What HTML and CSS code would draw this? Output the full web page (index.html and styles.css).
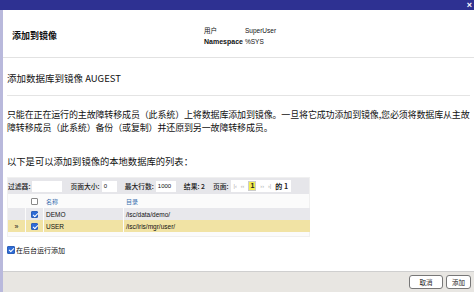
FILE: index.html
```html
<!DOCTYPE html>
<html>
<head>
<meta charset="utf-8">
<link rel="stylesheet" href="styles.css">
</head>
<body>
<div class="window">
  <div class="topbar"><span class="close">×</span></div>
  <div class="frame">
    <header class="header">
      <div class="htitle">添加到镜像</div>
      <div class="info">
        <div class="irow"><span class="ilabel">用户</span><span class="ival">SuperUser</span></div>
        <div class="irow"><span class="ilabel strong">Namespace</span><span class="ival">%SYS</span></div>
      </div>
    </header>
    <main class="content">
      <div class="subtitle">添加数据库到镜像 AUGEST</div>
      <p class="desc">只能在正在运行的主故障转移成员（此系统）上将数据库添加到镜像。一旦将它成功添加到镜像,您必须将数据库从主故障转移成员（此系统）备份（或复制）并还原到另一故障转移成员。</p>
      <div class="listhead">以下是可以添加到镜像的本地数据库的列表：</div>
      <div class="tablebox">
        <div class="toolbar">
          <span class="lbl">过滤器:</span><span class="inp w30"></span>
          <span class="lbl gap">页面大小:</span><span class="inp w14">0</span>
          <span class="lbl gap">最大行数:</span><span class="inp w20">1000</span>
          <span class="lbl gap">结果: 2</span>
          <span class="lbl gap">页面:</span>
          <span class="pager"><span class="pg">|‹</span><span class="pg">‹‹</span><span class="cur">1</span><span class="pg">››</span><span class="pg">›|</span><span class="of">的 1</span></span>
        </div>
        <div class="grid">
          <div class="c0 hd"></div><div class="c1 hd"><span class="cb"></span></div><div class="c2 hd th">名称</div><div class="c3 hd th">目录</div>
          <div class="c0 r1"></div><div class="c1 r1"><span class="cb on"></span></div><div class="c2 r1">DEMO</div><div class="c3 r1">/isc/data/demo/</div>
          <div class="c0 r2">»</div><div class="c1 r2"><span class="cb on"></span></div><div class="c2 r2">USER</div><div class="c3 r2">/isc/iris/mgr/user/</div>
        </div>
      </div>
      <label class="bg"><span class="cb on big"></span>在后台运行添加</label>
    </main>
    <footer class="footer">
      <button class="btn">取消</button>
      <button class="btn">添加</button>
    </footer>
  </div>
</div>
</body>
</html>
```

FILE: styles.css
```css
* { box-sizing: border-box; }
html, body { margin: 0; padding: 0; background: #fff; }
body { font-family: "Noto Sans CJK SC", "Liberation Sans", sans-serif; color: #111; }
.window { width: 474px; height: 292px; display: flex; flex-direction: column; overflow: hidden; }
.topbar { height: 10px; background: #2e3192; display: flex; justify-content: flex-end; align-items: center; padding-right: 2px; }
.close { color: #fff; font-size: 9px; line-height: 10px; font-family: "Liberation Sans", sans-serif; font-weight: bold; }
.frame { flex: 1; display: flex; flex-direction: column; border-left: 3px solid #b9b9dc; }
.header { height: 48px; display: flex; align-items: center; border-bottom: 1px solid #e2e2e2; padding-left: 9px; padding-top: 3px; }
.htitle { font-size: 9px; font-weight: bold; width: 192px; }
.info { display: flex; flex-direction: column; gap: 2px; margin-top: 2px; }
.irow { display: flex; align-items: baseline; font-size: 6.5px; line-height: 9px; }
.ilabel { width: 41px; }
.strong { font-weight: bold; font-family: "Liberation Sans", sans-serif; font-size: 7px; }
.ival { font-family: "Liberation Sans", sans-serif; font-size: 6.5px; }
.content { flex: 1; padding: 0 4px; }
.subtitle { height: 38px; display: flex; align-items: center; font-size: 9.5px; border-bottom: 1px solid #e4e4e4; padding-top: 2px; }
.desc { margin: 12px 0 0; font-size: 9px; line-height: 13px; letter-spacing: -0.15px; }
.listhead { margin-top: 21px; font-size: 9.3px; line-height: 13px; }
.tablebox { margin-top: 9px; width: 303px; background: #fbfbfb; border: 1px solid #f0f0f0; padding-bottom: 4px; }
.toolbar { height: 16px; background: #e6e6ea; display: flex; align-items: center; font-size: 6.8px; padding-left: 0; }
.lbl { white-space: nowrap; color: #222; font-weight: 500; }
.gap { margin-left: 8px; }
.inp { height: 11px; background: #fff; margin-left: 2px; font-family: "Liberation Sans", sans-serif; font-size: 6px; line-height: 11px; padding-left: 2px; }
.w30 { width: 30px; }
.w14 { width: 15px; }
.w20 { width: 20px; }
.pager { margin-left: 2px; display: flex; align-items: center; background: #fff; height: 12px; padding: 0 3px; gap: 4px; font-family: "Liberation Sans", sans-serif; font-size: 5.5px; color: #aaa; }
.cur { background: #f2ee50; color: #222; font-weight: bold; font-size: 7px; padding: 0 1px; border: 1px solid #ccc; line-height: 8px; }
.of { color: #222; font-family: "Noto Sans CJK SC", sans-serif; font-size: 7px; font-weight: bold; }
.grid { display: grid; grid-template-columns: 17px 17px 79px 186px; grid-template-rows: 14px 12px 12px; column-gap: 1px; row-gap: 0; margin-top: 0; font-size: 6.5px; font-family: "Liberation Sans", "Noto Sans CJK SC", sans-serif; }
.grid > div { display: flex; align-items: center; padding-left: 2px; }
.th { color: #3a6fb0; font-family: "Noto Sans CJK SC", sans-serif; font-size: 6px; }
.r1 { background: #e8e8ec; }
.r2 { background: #f1e3a4; }
.c0 { justify-content: center; padding-left: 0 !important; font-size: 7px; }
.c1 { justify-content: center; padding-left: 0 !important; }
.cb { width: 7px; height: 7px; border: 1px solid #888; background: #fff; border-radius: 1px; display: inline-block; position: relative; }
.cb.on { background: #2d6bd6; border-color: #2d5fb8; }
.cb.on::after { content: ""; position: absolute; left: 1.5px; top: 0px; width: 2px; height: 4px; border: solid #fff; border-width: 0 1px 1px 0; transform: rotate(45deg); }
.bg { display: flex; align-items: center; margin-top: 8px; font-size: 7px; gap: 1px; }
.cb.big { width: 8px; height: 8px; }
.footer { height: 21px; background: #e8e6e2; border-top: 1px solid #cfcfcf; display: flex; justify-content: flex-end; align-items: center; gap: 3px; padding-right: 3px; }
.btn { height: 14px; background: #fff; border: 1px solid #777; border-radius: 3px; font-family: "Noto Sans CJK SC", sans-serif; font-size: 6.5px; padding: 0; line-height: 12px; color: #222; }
.btn:first-child { width: 34px; }
.btn:last-child { width: 25px; }
```
